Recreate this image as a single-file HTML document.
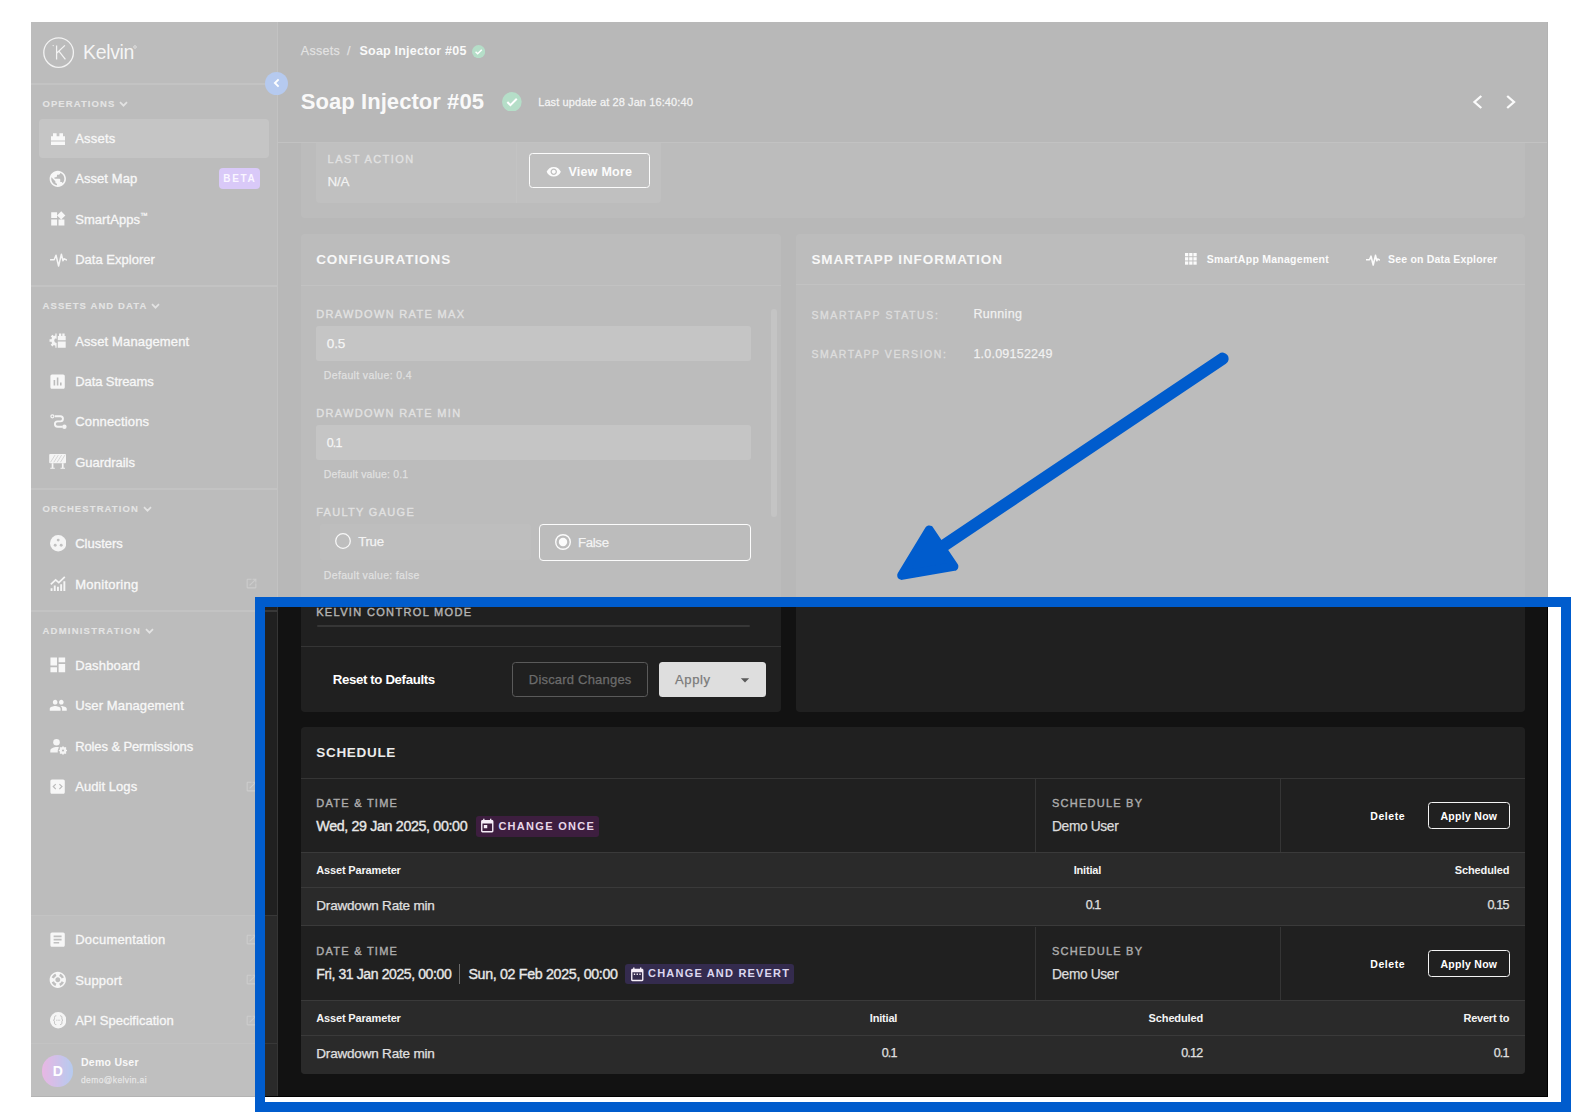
<!DOCTYPE html>
<html lang="en"><head><meta charset="utf-8"><title>Kelvin - Soap Injector #05</title>
<style>
html,body{margin:0;padding:0;background:#fff;}
body{width:1580px;height:1120px;position:relative;overflow:hidden;font-family:"Liberation Sans", Arial, sans-serif;}
.b{position:absolute;display:block}
.t{position:absolute;white-space:nowrap;font-family:"Liberation Sans", Arial, sans-serif;}
#s{position:absolute;left:0;top:0;width:1580px;height:1120px;clip-path:inset(22px 32px 23px 31px);}
</style></head>
<body>
<div id="s">
<div class="b" style="left:31.0px;top:22.0px;width:1517.0px;height:1075.0px;background:#121212;"></div>
<div class="b" style="left:31.0px;top:22.0px;width:246.0px;height:1075.0px;background:#202020;"></div>
<div class="b" style="left:277.0px;top:22.0px;width:1.0px;height:1075.0px;background:#353535;"></div>
<div class="b" style="left:278.0px;top:142.0px;width:1270.0px;height:1.0px;background:#353535;"></div>
<svg class="b" style="left:42.0px;top:36.0px;" width="34" height="34" viewBox="0 0 34 34"><circle cx="16.6" cy="16.6" r="14.8" fill="none" stroke="#d6d6d6" stroke-width="1.3"/><circle cx="11.2" cy="9.6" r="0.7" fill="#d6d6d6"/><path d="M14.6 9.400V23.400M14.600 17.200L22.900 9.400M16.900 15.200L23.400 23.400" stroke="#d6d6d6" stroke-width="1.25" fill="none"/></svg>
<div class="t" style="top:39.1px;font-size:19.5px;line-height:27px;color:#dcdcdc;letter-spacing:-0.38px;left:83.1px;">Kelvin</div>
<svg class="b" style="left:132.7px;top:45.3px;" width="4" height="4" viewBox="0 0 4 4"><circle cx="2" cy="2" r="1.3" fill="none" stroke="#d6d6d6" stroke-width="0.6"/></svg>
<div class="b" style="left:31.0px;top:82.5px;width:246.0px;height:2.0px;background:#383838;"></div>
<div class="b" style="left:265.0px;top:71.6px;width:23.4px;height:23.4px;background:#0a4ec8;border-radius:12px;"></div>
<svg class="b" style="left:270.7px;top:77.3px;" width="12" height="12" viewBox="0 0 12 12"><path d="M7.600 2.300L3.900 6l3.700 3.700" fill="none" stroke="#fff" stroke-width="1.900"/></svg>
<div class="t" style="top:96.8px;font-size:9.5px;line-height:13px;color:#a6a6a6;font-weight:700;-webkit-text-stroke:0.15px #a6a6a6;letter-spacing:1.07px;left:42.5px;">OPERATIONS</div>
<svg class="b" style="left:119.2px;top:100.9px;" width="9" height="6" viewBox="0 0 9 6"><path d="M1 1.200L4.500 4.700 8 1.200" fill="none" stroke="#a0a0a0" stroke-width="1.700"/></svg>
<div class="b" style="left:38.5px;top:119.0px;width:230.5px;height:38.5px;background:#3f3f3f;border-radius:4px;"></div>
<div class="t" style="top:129.9px;font-size:13px;line-height:18px;color:#e4e4e4;-webkit-text-stroke:0.3px #e4e4e4;letter-spacing:0.20px;left:75.2px;">Assets</div>
<svg class="b" style="left:51.0px;top:131.5px;" width="14" height="13.5" viewBox="0 0 14 13.5"><path d="M0 4.200h14v4.200H0zM0 9.400h14v4.100H0zM2 1.300h3.600v3H2zM8.400 1.300H12v3H8.400z" fill="#e8e8e8"/></svg>
<div class="t" style="top:170.4px;font-size:13px;line-height:18px;color:#e4e4e4;-webkit-text-stroke:0.3px #e4e4e4;letter-spacing:0.07px;left:75.2px;">Asset Map</div>
<svg class="b" style="left:48.1px;top:168.9px;" width="19.6" height="19.6" viewBox="0 0 24 24"><path d="M12 2C6.48 2 2 6.48 2 12s4.48 10 10 10 10-4.48 10-10S17.52 2 12 2zm-1 17.93c-3.95-.49-7-3.85-7-7.93 0-.62.08-1.21.21-1.79L9 15v1c0 1.1.9 2 2 2v1.93zm6.9-2.54c-.26-.81-1-1.39-1.9-1.39h-1v-3c0-.55-.45-1-1-1H8v-2h2c.55 0 1-.45 1-1V7h2c1.1 0 2-.9 2-2v-.41c2.93 1.19 5 4.06 5 7.41 0 2.08-.8 3.97-2.1 5.39z" fill="#e4e4e4"/></svg>
<div class="b" style="left:219.0px;top:167.8px;width:41.0px;height:21.3px;background:#7f4be8;border-radius:4px;"></div>
<div class="t" style="top:171.9px;font-size:10px;line-height:14px;color:#eadfff;font-weight:700;letter-spacing:1.67px;left:223.3px;">BETA</div>
<div class="t" style="top:210.7px;font-size:13px;line-height:18px;color:#e4e4e4;-webkit-text-stroke:0.3px #e4e4e4;letter-spacing:0.06px;left:75.2px;">SmartApps</div>
<svg class="b" style="left:49.1px;top:210.2px;" width="17.6" height="17.6" viewBox="0 0 24 24"><path d="M13 13v8h8v-8h-8zM3 21h8v-8H3v8zM3 3v8h8V3H3zm13.66-1.31L11 7.34 16.66 13l5.66-5.66-5.66-5.65z" fill="#e4e4e4"/></svg>
<div class="t" style="top:210.8px;font-size:7.5px;line-height:10px;color:#e4e4e4;-webkit-text-stroke:0.2px #e4e4e4;left:140.3px;">™</div>
<div class="t" style="top:251.2px;font-size:13px;line-height:18px;color:#e4e4e4;-webkit-text-stroke:0.3px #e4e4e4;letter-spacing:0.02px;left:75.2px;">Data Explorer</div>
<svg class="b" style="left:49.8px;top:251.0px;" width="17" height="17" viewBox="0 0 17 17"><path d="M0.500 8.800H4.200L6 4.300 8.600 15 11.400 3.200 13 9.800 14 7.700 16.500 8.900" fill="none" stroke="#dcdcdc" stroke-width="1.5" stroke-linejoin="round" stroke-linecap="round"/></svg>
<div class="b" style="left:31.0px;top:285.4px;width:246.0px;height:1.3px;background:#383838;"></div>
<div class="t" style="top:299.3px;font-size:9.5px;line-height:13px;color:#a6a6a6;font-weight:700;-webkit-text-stroke:0.15px #a6a6a6;letter-spacing:1.09px;left:42.5px;">ASSETS AND DATA</div>
<svg class="b" style="left:151.3px;top:303.4px;" width="9" height="6" viewBox="0 0 9 6"><path d="M1 1.200L4.500 4.700 8 1.200" fill="none" stroke="#a0a0a0" stroke-width="1.700"/></svg>
<div class="t" style="top:332.7px;font-size:13px;line-height:18px;color:#e4e4e4;-webkit-text-stroke:0.3px #e4e4e4;letter-spacing:0.13px;left:75.2px;">Asset Management</div>
<svg class="b" style="left:49.4px;top:333.1px;" width="17" height="15.2" viewBox="0 0 17 15.2"><path d="M7.6 14.69L6.36 14.69L6.36 12.75L4.83 12.12L3.46 13.49L1.71 11.74L3.08 10.37L2.45 8.84L0.51 8.84L0.51 6.36L2.45 6.36L3.08 4.83L1.71 3.46L3.46 1.71L4.83 3.08L6.36 2.45L6.36 0.51L7.6 0.51ZM7.6 5.2A2.4 2.4 0 0 0 7.6 10Z" fill="#dcdcdc" fill-rule="evenodd"/><path d="M8.800 3h7.900v4.300H8.800zM8.800 8.500h7.900v6.200H8.800zM10 0.500h2.300V3H10zM13.300 0.500h2.300V3h-2.300z" fill="#dcdcdc"/></svg>
<div class="t" style="top:373.0px;font-size:13px;line-height:18px;color:#e4e4e4;-webkit-text-stroke:0.3px #e4e4e4;letter-spacing:-0.09px;left:75.2px;">Data Streams</div>
<svg class="b" style="left:48.3px;top:371.7px;" width="19.2" height="19.2" viewBox="0 0 24 24"><path d="M19 3H5c-1.1 0-2 .9-2 2v14c0 1.1.9 2 2 2h14c1.1 0 2-.9 2-2V5c0-1.1-.9-2-2-2zM9 17H7v-7h2v7zm4 0h-2V7h2v10zm4 0h-2v-4h2v4z" fill="#e4e4e4"/></svg>
<div class="t" style="top:413.2px;font-size:13px;line-height:18px;color:#e4e4e4;-webkit-text-stroke:0.3px #e4e4e4;letter-spacing:0.16px;left:75.2px;">Connections</div>
<svg class="b" style="left:49.5px;top:413.0px;" width="17" height="17" viewBox="0 0 17 17"><circle cx="2.400" cy="3.300" r="1.500" fill="none" stroke="#dcdcdc" stroke-width="1.200"/><path d="M4.800 3.300H10.400a2.550 2.550 0 0 1 0 5.100H7.600a2.700 2.700 0 0 0 0 5.400H12.500" fill="none" stroke="#dcdcdc" stroke-width="1.900"/><circle cx="14.400" cy="13.800" r="2.200" fill="#dcdcdc"/></svg>
<div class="t" style="top:453.5px;font-size:13px;line-height:18px;color:#e4e4e4;-webkit-text-stroke:0.3px #e4e4e4;letter-spacing:-0.03px;left:75.2px;">Guardrails</div>
<svg class="b" style="left:49.3px;top:454.2px;" width="17.5" height="15" viewBox="0 0 17.5 15"><rect x="0.200" y="0.100" width="16.800" height="9.200" rx="1" fill="#dcdcdc"/><path d="M1.500 8.300L6 1.100M4.800 8.300L9.300 1.100M8.100 8.300L12.600 1.100M11.400 8.300L15.900 1.100" stroke="#4a4a4a" stroke-width="0.700"/><path d="M2.700 9.200h1.700v4.600H2.700zM12.900 9.200h1.700v4.600h-1.700zM1.300 13.700h4.500v1.100H1.300zM11.500 13.700H16v1.100h-4.500z" fill="#dcdcdc"/></svg>
<div class="b" style="left:31.0px;top:488.4px;width:246.0px;height:1.3px;background:#383838;"></div>
<div class="t" style="top:501.9px;font-size:9.5px;line-height:13px;color:#a6a6a6;font-weight:700;-webkit-text-stroke:0.15px #a6a6a6;letter-spacing:1.10px;left:42.5px;">ORCHESTRATION</div>
<svg class="b" style="left:142.9px;top:506.0px;" width="9" height="6" viewBox="0 0 9 6"><path d="M1 1.200L4.500 4.700 8 1.200" fill="none" stroke="#a0a0a0" stroke-width="1.700"/></svg>
<div class="t" style="top:535.2px;font-size:13px;line-height:18px;color:#e4e4e4;-webkit-text-stroke:0.3px #e4e4e4;letter-spacing:-0.01px;left:75.2px;">Clusters</div>
<svg class="b" style="left:49.7px;top:535.3px;" width="16.4" height="16.4" viewBox="0 0 16.4 16.4"><circle cx="8.200" cy="8.200" r="8.200" fill="#dcdcdc"/><circle cx="8.200" cy="5.100" r="1.450" fill="#303030"/><circle cx="5.200" cy="10.300" r="1.450" fill="#303030"/><circle cx="11.200" cy="10.300" r="1.450" fill="#303030"/></svg>
<div class="t" style="top:575.7px;font-size:13px;line-height:18px;color:#e4e4e4;-webkit-text-stroke:0.3px #e4e4e4;letter-spacing:0.26px;left:75.2px;">Monitoring</div>
<svg class="b" style="left:49.8px;top:575.8px;" width="16" height="15" viewBox="0 0 16 15"><path d="M0.800 8.300L5.600 3.800 8.800 6.600 14.800 0.800" fill="none" stroke="#dcdcdc" stroke-width="1.700"/><path d="M0.600 12.300h1.900V15H0.600zM3.800 9.500h1.900V15H3.800zM7 10.800h1.900V15H7zM10.200 8.300h1.900V15h-1.900zM13.400 5.200h1.900V15h-1.900z" fill="#dcdcdc"/></svg>
<svg class="b" style="left:245.4px;top:577.2px;" width="13" height="13" viewBox="0 0 24 24"><path d="M19 19H5V5h7V3H5c-1.11 0-2 .9-2 2v14c0 1.1.89 2 2 2h14c1.1 0 2-.9 2-2v-7h-2v7zM14 3v2h3.59l-9.83 9.83 1.41 1.41L19 6.41V10h2V3h-7z" fill="#555555"/></svg>
<div class="b" style="left:31.0px;top:610.3px;width:246.0px;height:1.3px;background:#383838;"></div>
<div class="t" style="top:623.6px;font-size:9.5px;line-height:13px;color:#a6a6a6;font-weight:700;-webkit-text-stroke:0.15px #a6a6a6;letter-spacing:1.22px;left:42.5px;">ADMINISTRATION</div>
<svg class="b" style="left:145.0px;top:627.7px;" width="9" height="6" viewBox="0 0 9 6"><path d="M1 1.200L4.500 4.700 8 1.200" fill="none" stroke="#a0a0a0" stroke-width="1.700"/></svg>
<div class="t" style="top:656.7px;font-size:13px;line-height:18px;color:#e4e4e4;-webkit-text-stroke:0.3px #e4e4e4;letter-spacing:0.15px;left:75.2px;">Dashboard</div>
<svg class="b" style="left:48.1px;top:655.2px;" width="19.6" height="19.6" viewBox="0 0 24 24"><path d="M3 13h8V3H3v10zm0 8h8v-6H3v6zm10 0h8V11h-8v10zm0-18v6h8V3h-8z" fill="#e4e4e4"/></svg>
<div class="t" style="top:697.3px;font-size:13px;line-height:18px;color:#e4e4e4;-webkit-text-stroke:0.3px #e4e4e4;letter-spacing:0.12px;left:75.2px;">User Management</div>
<svg class="b" style="left:48.6px;top:696.4px;" width="18.5" height="18.5" viewBox="0 0 24 24"><path d="M16 11c1.66 0 2.99-1.34 2.99-3S17.66 5 16 5c-1.66 0-3 1.34-3 3s1.34 3 3 3zm-8 0c1.66 0 2.99-1.34 2.99-3S9.66 5 8 5C6.34 5 5 6.34 5 8s1.34 3 3 3zm0 2c-2.33 0-7 1.17-7 3.5V19h14v-2.5c0-2.33-4.67-3.5-7-3.5zm8 0c-.29 0-.62.02-.97.05 1.16.84 1.97 1.97 1.97 3.45V19h6v-2.5c0-2.33-4.67-3.5-7-3.5z" fill="#e4e4e4"/></svg>
<div class="t" style="top:737.7px;font-size:13px;line-height:18px;color:#e4e4e4;-webkit-text-stroke:0.3px #e4e4e4;letter-spacing:-0.11px;left:75.2px;">Roles &amp; Permissions</div>
<svg class="b" style="left:49.5px;top:737.5px;" width="17.5" height="17" viewBox="0 0 17.5 17"><circle cx="6.500" cy="4.300" r="3.300" fill="#dcdcdc"/><path d="M0.300 14.500v-1.800c0-2.300 4-3.600 6.200-3.600.8 0 1.800.15 2.700.45-1 1-1.600 2.400-1.500 4.950z" fill="#dcdcdc"/><circle cx="13" cy="12.500" r="2.600" fill="none" stroke="#dcdcdc" stroke-width="1.700"/><path d="M13 8.300v8.400M8.800 12.500h8.400M10 9.500l6 6M16 9.500l-6 6" stroke="#dcdcdc" stroke-width="1.200"/><circle cx="13" cy="12.500" r="1.100" fill="#202020"/></svg>
<div class="t" style="top:778.0px;font-size:13px;line-height:18px;color:#e4e4e4;-webkit-text-stroke:0.3px #e4e4e4;letter-spacing:0.06px;left:75.2px;">Audit Logs</div>
<svg class="b" style="left:48.3px;top:776.7px;" width="19.2" height="19.2" viewBox="0 0 24 24"><path d="M19 3H5c-1.1 0-2 .9-2 2v14c0 1.1.9 2 2 2h14c1.1 0 2-.9 2-2V5c0-1.100-.9-2-2-2zM10.300 14.600l-1.100 1.100L5.500 12l3.700-3.700 1.100 1.100L7.700 12l2.600 2.600zm4.500 1.100l-1.100-1.100 2.600-2.600-2.600-2.600 1.100-1.100 3.700 3.700-3.700 3.700z" fill="#e4e4e4"/></svg>
<svg class="b" style="left:245.4px;top:779.5px;" width="13" height="13" viewBox="0 0 24 24"><path d="M19 19H5V5h7V3H5c-1.11 0-2 .9-2 2v14c0 1.1.89 2 2 2h14c1.1 0 2-.9 2-2v-7h-2v7zM14 3v2h3.59l-9.83 9.83 1.41 1.41L19 6.41V10h2V3h-7z" fill="#555555"/></svg>
<div class="b" style="left:31.0px;top:915.0px;width:246.0px;height:182.0px;background:#2a2a2a;"></div>
<div class="b" style="left:31.0px;top:914.8px;width:246.0px;height:1.2px;background:#383838;"></div>
<div class="t" style="top:931.4px;font-size:13px;line-height:18px;color:#e4e4e4;-webkit-text-stroke:0.3px #e4e4e4;letter-spacing:0.21px;left:75.2px;">Documentation</div>
<svg class="b" style="left:48.3px;top:930.1px;" width="19.2" height="19.2" viewBox="0 0 24 24"><path d="M19 3H5c-1.1 0-2 .9-2 2v14c0 1.1.9 2 2 2h14c1.1 0 2-.9 2-2V5c0-1.1-.9-2-2-2zm-5 14H7v-2h7v2zm3-4H7v-2h10v2zm0-4H7V7h10v2z" fill="#e4e4e4"/></svg>
<svg class="b" style="left:245.4px;top:932.9px;" width="13" height="13" viewBox="0 0 24 24"><path d="M19 19H5V5h7V3H5c-1.11 0-2 .9-2 2v14c0 1.1.89 2 2 2h14c1.1 0 2-.9 2-2v-7h-2v7zM14 3v2h3.59l-9.83 9.83 1.41 1.41L19 6.41V10h2V3h-7z" fill="#555555"/></svg>
<div class="t" style="top:971.7px;font-size:13px;line-height:18px;color:#e4e4e4;-webkit-text-stroke:0.3px #e4e4e4;letter-spacing:0.18px;left:75.2px;">Support</div>
<svg class="b" style="left:48.1px;top:970.2px;" width="19.6" height="19.6" viewBox="0 0 24 24"><path d="M12 2C6.48 2 2 6.48 2 12s4.48 10 10 10 10-4.48 10-10S17.52 2 12 2zm7.46 7.12l-2.78 1.15c-.51-1.36-1.58-2.44-2.95-2.94l1.15-2.78c2.1.8 3.77 2.47 4.58 4.57zM12 15c-1.66 0-3-1.34-3-3s1.34-3 3-3 3 1.34 3 3-1.34 3-3 3zM9.13 4.54l1.17 2.78c-1.38.5-2.47 1.59-2.98 2.97L4.54 9.13c.81-2.11 2.48-3.78 4.59-4.59zM4.54 14.87l2.78-1.15c.51 1.38 1.59 2.46 2.97 2.96l-1.17 2.78c-2.1-.81-3.77-2.48-4.58-4.59zm10.34 4.59l-1.15-2.78c1.37-.51 2.45-1.59 2.95-2.97l2.78 1.17c-.81 2.1-2.48 3.77-4.58 4.58z" fill="#e4e4e4"/></svg>
<svg class="b" style="left:245.4px;top:973.2px;" width="13" height="13" viewBox="0 0 24 24"><path d="M19 19H5V5h7V3H5c-1.11 0-2 .9-2 2v14c0 1.1.89 2 2 2h14c1.1 0 2-.9 2-2v-7h-2v7zM14 3v2h3.59l-9.83 9.83 1.41 1.41L19 6.41V10h2V3h-7z" fill="#555555"/></svg>
<div class="t" style="top:1012.2px;font-size:13px;line-height:18px;color:#e4e4e4;-webkit-text-stroke:0.3px #e4e4e4;letter-spacing:0.01px;left:75.2px;">API Specification</div>
<svg class="b" style="left:49.7px;top:1012.3px;" width="16.4" height="16.4" viewBox="0 0 16.4 16.4"><circle cx="8.200" cy="8.200" r="8.200" fill="#dcdcdc"/><path d="M6.300 3.800c-1.400 0-1.800.6-1.800 1.700v1.300c0 .8-.4 1.200-1.100 1.400.7.200 1.100.6 1.100 1.400v1.300c0 1.100.4 1.700 1.800 1.700M10.100 3.800c1.400 0 1.800.6 1.800 1.700v1.300c0 .8.400 1.200 1.100 1.400-.7.200-1.100.6-1.100 1.400v1.300c0 1.100-.4 1.700-1.800 1.700" fill="none" stroke="#202020" stroke-width="0.900"/><path d="M6.300 8.200h.9M7.800 8.200h.9M9.300 8.200h.9" stroke="#202020" stroke-width="0.900"/></svg>
<svg class="b" style="left:245.4px;top:1013.7px;" width="13" height="13" viewBox="0 0 24 24"><path d="M19 19H5V5h7V3H5c-1.11 0-2 .9-2 2v14c0 1.1.89 2 2 2h14c1.1 0 2-.9 2-2v-7h-2v7zM14 3v2h3.59l-9.83 9.83 1.41 1.41L19 6.41V10h2V3h-7z" fill="#555555"/></svg>
<div class="b" style="left:31.0px;top:1042.8px;width:246.0px;height:1.2px;background:#383838;"></div>
<div class="b" style="left:42.0px;top:1055.2px;width:31.4px;height:31.4px;border-radius:16px;background:linear-gradient(90deg,#b20ea2,#0a50c8);"></div>
<div class="t" style="top:1061.0px;font-size:14px;line-height:20px;color:#ffffff;font-weight:700;left:-242.3px;width:600px;text-align:center;">D</div>
<div class="t" style="top:1055.3px;font-size:10.5px;line-height:15px;color:#e8e8e8;font-weight:700;letter-spacing:0.26px;left:81.0px;">Demo User</div>
<div class="t" style="top:1073.5px;font-size:8.5px;line-height:12px;color:#b0b0b0;-webkit-text-stroke:0.25px #b0b0b0;letter-spacing:0.38px;left:81.0px;">demo@kelvin.ai</div>
<div class="t" style="top:42.4px;font-size:12.5px;line-height:18px;color:#a0a0a0;-webkit-text-stroke:0.25px #a0a0a0;letter-spacing:0.30px;left:300.8px;">Assets</div>
<div class="t" style="top:42.4px;font-size:12.5px;line-height:18px;color:#a0a0a0;-webkit-text-stroke:0.25px #a0a0a0;left:347.0px;">/</div>
<div class="t" style="top:42.4px;font-size:12.5px;line-height:18px;color:#eaeaea;font-weight:700;letter-spacing:0.21px;left:359.5px;">Soap Injector #05</div>
<svg class="b" style="left:471.9px;top:45.1px;" width="13.2" height="13.2" viewBox="0 0 24 24"><circle cx="12" cy="12" r="12" fill="#079049"/><path d="M6.500 12.300L10.300 16 17.800 8.500" fill="none" stroke="#fff" stroke-width="2.600"/></svg>
<div class="t" style="top:85.7px;font-size:22px;line-height:31px;color:#ececec;font-weight:700;letter-spacing:0.06px;left:300.8px;">Soap Injector #05</div>
<svg class="b" style="left:502.2px;top:91.8px;" width="19.7" height="19.7" viewBox="0 0 24 24"><circle cx="12" cy="12" r="12" fill="#079049"/><path d="M6.500 12.200L10.300 16 18 8.300" fill="none" stroke="#fff" stroke-width="2.500"/></svg>
<div class="t" style="top:94.5px;font-size:11px;line-height:15px;color:#d6d6d6;-webkit-text-stroke:0.3px #d6d6d6;letter-spacing:0.10px;left:538.2px;">Last update at 28 Jan 16:40:40</div>
<svg class="b" style="left:1470.0px;top:94.0px;" width="14" height="16" viewBox="0 0 14 16"><path d="M11.300 2L4.500 8l6.800 6" fill="none" stroke="#f2f2f2" stroke-width="2.300"/></svg>
<svg class="b" style="left:1504.0px;top:94.0px;" width="14" height="16" viewBox="0 0 14 16"><path d="M3.200 2L10 8l-6.800 6" fill="none" stroke="#f2f2f2" stroke-width="2.300"/></svg>
<div class="b" style="left:300.8px;top:143.0px;width:1224.2px;height:75.2px;background:#202020;border-radius:4px;border-top-left-radius:0;border-top-right-radius:0;"></div>
<div class="b" style="left:316.0px;top:143.0px;width:344.5px;height:59.5px;background:#2c2c2c;border-radius:4px;border-top-left-radius:0;border-top-right-radius:0;"></div>
<div class="b" style="left:516.0px;top:143.0px;width:1.0px;height:59.5px;background:#383838;"></div>
<div class="t" style="top:152.3px;font-size:11px;line-height:15px;color:#9c9c9c;-webkit-text-stroke:0.4px #9c9c9c;letter-spacing:1.42px;left:327.6px;">LAST ACTION</div>
<div class="t" style="top:172.2px;font-size:13.5px;line-height:19px;color:#d4d4d4;-webkit-text-stroke:0.25px #d4d4d4;letter-spacing:-0.25px;left:327.6px;">N/A</div>
<div class="b" style="left:529.4px;top:153.2px;width:120.2px;height:34.7px;border-radius:3.5px;border:1.8px solid #f6f6f6;box-sizing:border-box;"></div>
<svg class="b" style="left:545.5px;top:163.6px;" width="15.5" height="15.5" viewBox="0 0 24 24"><path d="M12 4.5C7 4.5 2.73 7.61 1 12c1.73 4.39 6 7.5 11 7.5s9.27-3.11 11-7.5c-1.73-4.39-6-7.5-11-7.5zM12 17c-2.76 0-5-2.24-5-5s2.24-5 5-5 5 2.24 5 5-2.24 5-5 5zm0-8c-1.66 0-3 1.34-3 3s1.34 3 3 3 3-1.34 3-3-1.34-3-3-3z" fill="#f6f6f6"/></svg>
<div class="t" style="top:162.5px;font-size:12.5px;line-height:18px;color:#f6f6f6;font-weight:700;letter-spacing:0.24px;left:568.5px;">View More</div>
<div class="b" style="left:300.8px;top:234.2px;width:480.6px;height:477.7px;background:#202020;border-radius:4px;"></div>
<div class="t" style="top:249.7px;font-size:13.5px;line-height:19px;color:#e6e6e6;font-weight:700;letter-spacing:0.92px;left:316.2px;">CONFIGURATIONS</div>
<div class="b" style="left:300.8px;top:285.0px;width:480.6px;height:1.0px;background:#353535;"></div>
<div class="t" style="top:306.9px;font-size:11px;line-height:15px;color:#9c9c9c;-webkit-text-stroke:0.4px #9c9c9c;letter-spacing:1.34px;left:316.2px;">DRAWDOWN RATE MAX</div>
<div class="b" style="left:316.0px;top:326.3px;width:435.0px;height:34.6px;background:#3e3e3e;border-radius:3px;"></div>
<div class="t" style="top:334.4px;font-size:13.5px;line-height:19px;color:#dedede;-webkit-text-stroke:0.25px #dedede;letter-spacing:-0.13px;left:326.8px;">0.5</div>
<div class="t" style="top:367.7px;font-size:10.5px;line-height:15px;color:#9a9a9a;-webkit-text-stroke:0.25px #9a9a9a;letter-spacing:0.36px;left:323.8px;">Default value: 0.4</div>
<div class="t" style="top:405.9px;font-size:11px;line-height:15px;color:#9c9c9c;-webkit-text-stroke:0.4px #9c9c9c;letter-spacing:1.32px;left:316.2px;">DRAWDOWN RATE MIN</div>
<div class="b" style="left:316.0px;top:425.3px;width:435.0px;height:34.6px;background:#3e3e3e;border-radius:3px;"></div>
<div class="t" style="top:433.9px;font-size:12.5px;line-height:18px;color:#dedede;-webkit-text-stroke:0.25px #dedede;letter-spacing:-0.90px;left:326.8px;">0.1</div>
<div class="t" style="top:466.7px;font-size:10.5px;line-height:15px;color:#9a9a9a;-webkit-text-stroke:0.25px #9a9a9a;letter-spacing:0.15px;left:323.8px;">Default value: 0.1</div>
<div class="t" style="top:504.5px;font-size:11px;line-height:15px;color:#9c9c9c;-webkit-text-stroke:0.4px #9c9c9c;letter-spacing:1.29px;left:316.2px;">FAULTY GAUGE</div>
<div class="b" style="left:320.2px;top:524.4px;width:211.0px;height:35.6px;background:#272727;border-radius:3px;"></div>
<div class="b" style="left:539.0px;top:523.8px;width:212.4px;height:36.8px;border-radius:4px;border:1.6px solid #f6f6f6;box-sizing:border-box;"></div>
<svg class="b" style="left:333.5px;top:532.2px;" width="18" height="18" viewBox="0 0 18 18"><circle cx="9" cy="9" r="7.300" fill="none" stroke="#e6e6e6" stroke-width="1.300"/></svg>
<div class="t" style="top:531.7px;font-size:13.25px;line-height:19px;color:#d8d8d8;-webkit-text-stroke:0.25px #d8d8d8;letter-spacing:-0.35px;left:358.3px;">True</div>
<svg class="b" style="left:553.7px;top:533.2px;" width="18" height="18" viewBox="0 0 18 18"><circle cx="9" cy="9" r="7.300" fill="none" stroke="#f2f2f2" stroke-width="1.400"/><circle cx="9" cy="9" r="4.200" fill="#f2f2f2"/></svg>
<div class="t" style="top:532.9px;font-size:13.25px;line-height:19px;color:#d8d8d8;-webkit-text-stroke:0.25px #d8d8d8;letter-spacing:-0.32px;left:577.9px;">False</div>
<div class="t" style="top:567.6px;font-size:10.5px;line-height:15px;color:#9a9a9a;-webkit-text-stroke:0.25px #9a9a9a;letter-spacing:0.33px;left:323.8px;">Default value: false</div>
<div class="b" style="left:770.5px;top:309.0px;width:6.5px;height:208.0px;background:#3a3a3a;border-radius:3.2px;"></div>
<div class="t" style="top:605.0px;font-size:11px;line-height:15px;color:#b4b4b4;-webkit-text-stroke:0.4px #b4b4b4;letter-spacing:1.34px;left:316.2px;">KELVIN CONTROL MODE</div>
<div class="b" style="left:316.5px;top:625.0px;width:433.5px;height:1.9px;background:#363636;border-radius:1px;"></div>
<div class="b" style="left:300.8px;top:646.0px;width:480.6px;height:1.0px;background:#353535;"></div>
<div class="t" style="top:670.3px;font-size:13.25px;line-height:19px;color:#ffffff;font-weight:700;letter-spacing:-0.36px;left:332.7px;">Reset to Defaults</div>
<div class="b" style="left:512.0px;top:662.0px;width:135.7px;height:34.6px;border-radius:3.5px;border:1px solid #5a5a5a;box-sizing:border-box;"></div>
<div class="t" style="top:670.8px;font-size:13px;line-height:18px;color:#6c6c6c;-webkit-text-stroke:0.25px #6c6c6c;letter-spacing:0.20px;left:528.8px;">Discard Changes</div>
<div class="b" style="left:658.5px;top:662.0px;width:107.3px;height:34.6px;background:#dedede;border-radius:3.5px;"></div>
<div class="t" style="top:670.8px;font-size:13px;line-height:18px;color:#7a7a7a;-webkit-text-stroke:0.25px #7a7a7a;letter-spacing:0.62px;left:675.0px;">Apply</div>
<svg class="b" style="left:734.8px;top:670.4px;" width="20" height="20" viewBox="0 0 24 24"><path d="M7 10l5 5 5-5z" fill="#5a5a5a"/></svg>
<div class="b" style="left:796.3px;top:234.2px;width:728.7px;height:477.7px;background:#202020;border-radius:4px;"></div>
<div class="t" style="top:249.7px;font-size:13.5px;line-height:19px;color:#e6e6e6;font-weight:700;letter-spacing:0.95px;left:811.4px;">SMARTAPP INFORMATION</div>
<div class="b" style="left:796.2px;top:284.3px;width:728.8px;height:1.0px;background:#353535;"></div>
<svg class="b" style="left:1185.0px;top:253.2px;" width="11.7" height="11.7" viewBox="0 0 11.7 11.7"><g fill="#f0f0f0"><rect x="0.0" y="0.0" width="3.3" height="3.3"/><rect x="4.2" y="0.0" width="3.3" height="3.3"/><rect x="8.4" y="0.0" width="3.3" height="3.3"/><rect x="0.0" y="4.2" width="3.3" height="3.3"/><rect x="4.2" y="4.2" width="3.3" height="3.3"/><rect x="8.4" y="4.2" width="3.3" height="3.3"/><rect x="0.0" y="8.4" width="3.3" height="3.3"/><rect x="4.2" y="8.4" width="3.3" height="3.3"/><rect x="8.4" y="8.4" width="3.3" height="3.3"/></g></svg>
<div class="t" style="top:251.7px;font-size:10.5px;line-height:15px;color:#f0f0f0;font-weight:700;letter-spacing:0.26px;left:1206.8px;">SmartApp Management</div>
<svg class="b" style="left:1366.0px;top:252.5px;" width="14" height="13" viewBox="0 0 14 13"><path d="M0.500 6.800H3.500L5 3.200 7.200 12 9.500 2.400 10.800 7.800 11.700 6 13.500 6.900" fill="none" stroke="#f0f0f0" stroke-width="1.600" stroke-linejoin="round" stroke-linecap="round"/></svg>
<div class="t" style="top:251.7px;font-size:10.5px;line-height:15px;color:#f0f0f0;font-weight:700;letter-spacing:0.18px;left:1388.1px;">See on Data Explorer</div>
<div class="t" style="top:307.5px;font-size:10.5px;line-height:15px;color:#8e8e8e;-webkit-text-stroke:0.35px #8e8e8e;letter-spacing:1.61px;left:811.4px;">SMARTAPP STATUS:</div>
<div class="t" style="top:305.4px;font-size:12.5px;line-height:18px;color:#cfcfcf;-webkit-text-stroke:0.25px #cfcfcf;letter-spacing:0.32px;left:973.4px;">Running</div>
<div class="t" style="top:347.0px;font-size:10.5px;line-height:15px;color:#8e8e8e;-webkit-text-stroke:0.35px #8e8e8e;letter-spacing:1.55px;left:811.4px;">SMARTAPP VERSION:</div>
<div class="t" style="top:345.0px;font-size:12.5px;line-height:18px;color:#cfcfcf;-webkit-text-stroke:0.25px #cfcfcf;letter-spacing:0.23px;left:973.4px;">1.0.09152249</div>
<div class="b" style="left:300.8px;top:727.2px;width:1224.2px;height:346.6px;background:#202020;border-radius:4px;"></div>
<div class="t" style="top:743.1px;font-size:13.5px;line-height:19px;color:#ececec;font-weight:700;letter-spacing:0.68px;left:316.3px;">SCHEDULE</div>
<div class="b" style="left:300.8px;top:778.0px;width:1224.2px;height:1.0px;background:#353535;"></div>
<div class="t" style="top:795.8px;font-size:11px;line-height:15px;color:#acacac;-webkit-text-stroke:0.4px #acacac;letter-spacing:1.26px;left:316.3px;">DATE &amp; TIME</div>
<div class="t" style="top:815.7px;font-size:14.25px;line-height:20px;color:#e8e8e8;-webkit-text-stroke:0.35px #e8e8e8;letter-spacing:-0.35px;left:316.3px;">Wed, 29 Jan 2025, 00:00</div>
<div class="b" style="left:475.5px;top:816.0px;width:123.1px;height:20.5px;background:#3d1e3f;border-radius:3px;"></div>
<svg class="b" style="left:478.9px;top:818.4px;" width="16.5" height="16.5" viewBox="0 0 24 24"><path d="M19 3h-1V1h-2v2H8V1H6v2H5c-1.11 0-1.99.9-1.99 2L3 19c0 1.1.89 2 2 2h14c1.1 0 2-.9 2-2V5c0-1.1-.9-2-2-2zm0 16H5V8h14v11zM7 10h5v5H7z" fill="#f6eef8"/></svg>
<div class="t" style="top:818.5px;font-size:11px;line-height:15px;color:#e8d8ea;font-weight:700;letter-spacing:1.29px;left:498.4px;">CHANGE ONCE</div>
<div class="b" style="left:1035.2px;top:779.0px;width:1.0px;height:73.5px;background:#353535;"></div>
<div class="b" style="left:1280.0px;top:779.0px;width:1.0px;height:73.5px;background:#353535;"></div>
<div class="t" style="top:795.8px;font-size:11px;line-height:15px;color:#acacac;-webkit-text-stroke:0.4px #acacac;letter-spacing:1.24px;left:1052.0px;">SCHEDULE BY</div>
<div class="t" style="top:816.8px;font-size:13.75px;line-height:19px;color:#dcdcdc;-webkit-text-stroke:0.25px #dcdcdc;letter-spacing:-0.35px;left:1052.0px;">Demo User</div>
<div class="t" style="top:808.8px;font-size:10.5px;line-height:15px;color:#ffffff;font-weight:700;letter-spacing:0.54px;left:1370.3px;">Delete</div>
<div class="b" style="left:1427.9px;top:802.3px;width:81.9px;height:27.2px;border-radius:3.5px;border:1.7px solid #f4f4f4;box-sizing:border-box;"></div>
<div class="t" style="top:808.8px;font-size:10.5px;line-height:15px;color:#ffffff;font-weight:700;letter-spacing:0.28px;left:1440.5px;">Apply Now</div>
<div class="b" style="left:300.8px;top:852.4px;width:1224.2px;height:73.5px;background:#2a2a2a;"></div>
<div class="b" style="left:300.8px;top:852.4px;width:1224.2px;height:1.0px;background:#3a3a3a;"></div>
<div class="b" style="left:300.8px;top:887.1px;width:1224.2px;height:1.0px;background:#3a3a3a;"></div>
<div class="t" style="top:862.6px;font-size:11px;line-height:15px;color:#f4f4f4;font-weight:700;letter-spacing:-0.16px;left:316.3px;">Asset Parameter</div>
<div class="t" style="top:895.8px;font-size:13.5px;line-height:19px;color:#e0e0e0;-webkit-text-stroke:0.25px #e0e0e0;letter-spacing:-0.19px;left:316.3px;">Drawdown Rate min</div>
<div class="t" style="top:862.6px;font-size:11px;line-height:15px;color:#f4f4f4;font-weight:700;letter-spacing:-0.19px;right:478.9px;">Initial</div>
<div class="t" style="top:896.3px;font-size:12.5px;line-height:18px;color:#e0e0e0;-webkit-text-stroke:0.25px #e0e0e0;letter-spacing:-0.90px;right:479.6px;">0.1</div>
<div class="t" style="top:862.6px;font-size:11px;line-height:15px;color:#f4f4f4;font-weight:700;letter-spacing:-0.12px;right:70.7px;">Scheduled</div>
<div class="t" style="top:896.3px;font-size:12.5px;line-height:18px;color:#e0e0e0;-webkit-text-stroke:0.25px #e0e0e0;letter-spacing:-0.78px;right:71.4px;">0.15</div>
<div class="b" style="left:300.8px;top:925.4px;width:1224.2px;height:1.0px;background:#3a3a3a;"></div>
<div class="t" style="top:943.7px;font-size:11px;line-height:15px;color:#acacac;-webkit-text-stroke:0.4px #acacac;letter-spacing:1.26px;left:316.3px;">DATE &amp; TIME</div>
<div class="t" style="top:963.6px;font-size:14px;line-height:20px;color:#e8e8e8;-webkit-text-stroke:0.35px #e8e8e8;letter-spacing:-0.39px;left:316.3px;">Fri, 31 Jan 2025, 00:00</div>
<div class="b" style="left:459.1px;top:963.5px;width:1.0px;height:20.9px;background:#6a6a6a;"></div>
<div class="t" style="top:963.6px;font-size:14.25px;line-height:20px;color:#e8e8e8;-webkit-text-stroke:0.35px #e8e8e8;letter-spacing:-0.33px;left:468.4px;">Sun, 02 Feb 2025, 00:00</div>
<div class="b" style="left:625.2px;top:963.9px;width:169.0px;height:20.5px;background:#342b4e;border-radius:3px;"></div>
<svg class="b" style="left:628.6px;top:965.5px;" width="16.5" height="16.5" viewBox="0 0 24 24"><path d="M9 11H7v2h2v-2zm4 0h-2v2h2v-2zm4 0h-2v2h2v-2zm2-7h-1V2h-2v2H8V2H6v2H5c-1.11 0-1.99.9-1.99 2L3 20c0 1.1.89 2 2 2h14c1.1 0 2-.9 2-2V6c0-1.1-.9-2-2-2zm0 16H5V9h14v11z" fill="#f6eef8"/></svg>
<div class="t" style="top:966.4px;font-size:11px;line-height:15px;color:#dcd8f0;font-weight:700;letter-spacing:1.19px;left:648.1px;">CHANGE AND REVERT</div>
<div class="b" style="left:1035.2px;top:926.9px;width:1.0px;height:73.5px;background:#353535;"></div>
<div class="b" style="left:1280.0px;top:926.9px;width:1.0px;height:73.5px;background:#353535;"></div>
<div class="t" style="top:943.7px;font-size:11px;line-height:15px;color:#acacac;-webkit-text-stroke:0.4px #acacac;letter-spacing:1.24px;left:1052.0px;">SCHEDULE BY</div>
<div class="t" style="top:964.7px;font-size:13.75px;line-height:19px;color:#dcdcdc;-webkit-text-stroke:0.25px #dcdcdc;letter-spacing:-0.35px;left:1052.0px;">Demo User</div>
<div class="t" style="top:956.7px;font-size:10.5px;line-height:15px;color:#ffffff;font-weight:700;letter-spacing:0.54px;left:1370.3px;">Delete</div>
<div class="b" style="left:1427.9px;top:950.2px;width:81.9px;height:27.2px;border-radius:3.5px;border:1.7px solid #f4f4f4;box-sizing:border-box;"></div>
<div class="t" style="top:956.7px;font-size:10.5px;line-height:15px;color:#ffffff;font-weight:700;letter-spacing:0.28px;left:1440.5px;">Apply Now</div>
<div class="b" style="left:300.8px;top:1000.3px;width:1224.2px;height:73.5px;background:#2a2a2a;border-radius:0 0 4px 4px;"></div>
<div class="b" style="left:300.8px;top:1000.3px;width:1224.2px;height:1.0px;background:#3a3a3a;"></div>
<div class="b" style="left:300.8px;top:1035.0px;width:1224.2px;height:1.0px;background:#3a3a3a;"></div>
<div class="t" style="top:1010.5px;font-size:11px;line-height:15px;color:#f4f4f4;font-weight:700;letter-spacing:-0.16px;left:316.3px;">Asset Parameter</div>
<div class="t" style="top:1043.7px;font-size:13.5px;line-height:19px;color:#e0e0e0;-webkit-text-stroke:0.25px #e0e0e0;letter-spacing:-0.19px;left:316.3px;">Drawdown Rate min</div>
<div class="t" style="top:1010.5px;font-size:11px;line-height:15px;color:#f4f4f4;font-weight:700;letter-spacing:-0.19px;right:682.8px;">Initial</div>
<div class="t" style="top:1044.2px;font-size:12.5px;line-height:18px;color:#e0e0e0;-webkit-text-stroke:0.25px #e0e0e0;letter-spacing:-0.90px;right:683.5px;">0.1</div>
<div class="t" style="top:1010.5px;font-size:11px;line-height:15px;color:#f4f4f4;font-weight:700;letter-spacing:-0.12px;right:376.9px;">Scheduled</div>
<div class="t" style="top:1044.2px;font-size:12.5px;line-height:18px;color:#e0e0e0;-webkit-text-stroke:0.25px #e0e0e0;letter-spacing:-0.78px;right:377.6px;">0.12</div>
<div class="t" style="top:1010.5px;font-size:11px;line-height:15px;color:#f4f4f4;font-weight:700;letter-spacing:-0.21px;right:70.8px;">Revert to</div>
<div class="t" style="top:1044.2px;font-size:12.5px;line-height:18px;color:#e0e0e0;-webkit-text-stroke:0.25px #e0e0e0;letter-spacing:-0.90px;right:71.5px;">0.1</div>
<div class="b" style="left:1547.0px;top:22.0px;width:1.0px;height:1075.0px;background:#000;"></div>
<div class="b" style="left:31.0px;top:1096.0px;width:1517.0px;height:1.0px;background:#000;"></div>
</div>
<div class="b" style="left:31px;top:22px;width:1517px;height:580px;background:rgba(255,255,255,0.7)"></div>
<div class="b" style="left:31px;top:602px;width:229px;height:495px;background:rgba(255,255,255,0.7)"></div>
<div class="b" style="left:255px;top:597px;width:1316px;height:515px;border:10px solid #005ccd;box-sizing:border-box"></div>
<svg class="b" style="left:0;top:0" width="1580" height="1120" viewBox="0 0 1580 1120">
<path d="M1222.5 358.7L925 558.2" stroke="#005ccd" stroke-width="12.2" stroke-linecap="round" fill="none"/>
<path d="M929.3 529.9L953.9 566.4 901.7 575.4Z" fill="#005ccd" stroke="#005ccd" stroke-width="9" stroke-linejoin="round"/>
</svg>
</body></html>
